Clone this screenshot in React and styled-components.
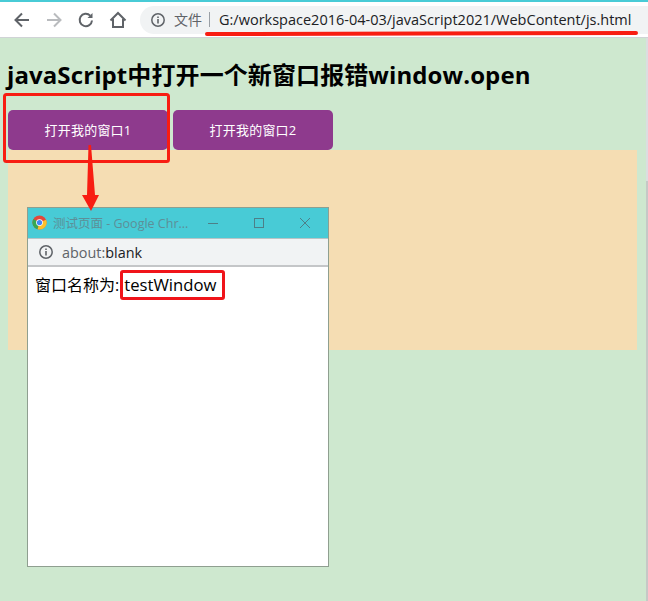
import React from "react";
import styled, { createGlobalStyle } from "styled-components";

const Global = createGlobalStyle`
  html, body { margin: 0; padding: 0; background: #cee8cf; }
  body { font-family: "Open Sans", "Noto Sans CJK SC", sans-serif; }
  #root { width: 648px; height: 601px; overflow: hidden; }
`;

const Screen = styled.div`
  position: relative;
  width: 648px;
  height: 601px;
  overflow: hidden;
  display: flex;
  flex-direction: column;
  background: #cee8cf;
`;

const TopStrip = styled.div`
  height: 2px;
  background: #48cbd6;
  flex: none;
`;

const Toolbar = styled.div`
  height: 36px;
  flex: none;
  background: #fff;
  display: flex;
  align-items: center;
  padding: 0 0 0 12px;
  box-sizing: border-box;
  border-bottom: 1px solid #d0d3d6;
`;

const NavIcon = styled.svg`
  width: 20px;
  height: 20px;
  margin-right: 12px;
  flex: none;
  fill: none;
  stroke: ${(p) => (p.$off ? "#b9bbbe" : "#5f6368")};
  stroke-width: 2;
`;

const UrlBar = styled.div`
  flex: 1;
  height: 28px;
  border-radius: 14px 0 0 14px;
  background: #f1f3f4;
  display: flex;
  align-items: center;
  padding-left: 10px;
`;

const FileLabel = styled.span`
  color: #5f6368;
  font-size: 14px;
  margin-left: 8px;
  padding-right: 7px;
  border-right: 1px solid #9aa0a6;
  line-height: 15px;
`;

const UrlText = styled.span`
  color: #202124;
  margin-left: 9px;
  font-size: 14.5px;
  white-space: nowrap;
`;

const Page = styled.main`
  flex: 1;
  padding: 0 10px 0 8px;
`;

const Heading = styled.h1`
  margin: 20px 0 18px -1px;
  font-size: 24px;
  letter-spacing: 0.1px;
  line-height: 34px;
  font-weight: 700;
  color: #000;
  white-space: nowrap;
`;

const ButtonRow = styled.div`
  display: flex;
  gap: 5px;
`;

const PurpleButton = styled.button`
  width: 160px;
  height: 40px;
  border: 0;
  padding: 0 0 2px;
  border-radius: 5px;
  background: #8e3a8d;
  color: #fff;
  font-family: inherit;
  font-size: 13px;
  letter-spacing: 0.2px;
`;

const Panel = styled.div`
  height: 200px;
  width: 629px;
  background: #f5ddb3;
`;

const PopupWindow = styled.div`
  position: absolute;
  left: 27px;
  top: 207px;
  width: 302px;
  height: 360px;
  box-sizing: border-box;
  border: 1px solid #8f9f90;
  background: #fff;
  display: flex;
  flex-direction: column;
`;

const TitleBar = styled.div`
  height: 30px;
  flex: none;
  background: #48cbd6;
  display: flex;
  align-items: center;
  padding-left: 4px;
  border-bottom: 1px solid #b8c4c6;
  font-size: 12.5px;
  color: #5d8f98;
`;

const TitleText = styled.span`
  margin-left: 6px;
  padding-bottom: 2px;
  width: 140px;
  white-space: nowrap;
`;

const WinControl = styled.svg`
  width: 12px;
  height: 12px;
  flex: none;
  margin-left: ${(p) => p.$gap}px;
  fill: none;
  stroke: #4d7f88;
  stroke-width: 1;
`;

const PopupAddress = styled.div`
  height: 26px;
  flex: none;
  background: #f1f3f4;
  border-bottom: 2px solid #c4c6c8;
  display: flex;
  align-items: center;
  padding-left: 10px;
  font-size: 14.4px;
  color: #202124;
`;

const AboutScheme = styled.span`
  color: #5f6368;
  margin-left: 8px;
`;

const PopupBody = styled.div`
  padding: 3px 0 0 7px;
  font-size: 16px;
  line-height: 30px;
  color: #000;
  display: flex;
  align-items: center;
  white-space: nowrap;
`;

const NameBox = styled.span`
  display: inline-block;
  border: 3px solid #f0141a;
  border-radius: 3px;
  margin-left: 1px;
  padding: 0 6px 0 1px;
  font-size: 16.7px;
  line-height: 24px;
`;

const ScrollEdge = styled.div`
  position: absolute;
  right: 0;
  top: 38px;
  width: 2px;
  height: 563px;
  background: linear-gradient(#dcdde0 0 143px, #c6c8c6 143px);
`;

const Annotation = styled.svg`
  position: absolute;
  left: 0;
  top: 0;
  width: 648px;
  height: 601px;
  pointer-events: none;
`;

const InfoIcon = styled.svg`
  width: 16px;
  height: 16px;
  flex: none;
`;

const Info = () => (
  <InfoIcon viewBox="0 0 16 16">
    <circle cx="8" cy="8" r="6.200" fill="none" stroke="#5f6368" strokeWidth="1.500" />
    <path d="M8 7v4.400M8 4.400v1.500" stroke="#5f6368" strokeWidth="1.600" fill="none" />
  </InfoIcon>
);

const ChromeLogo = styled.svg`
  width: 15px;
  height: 15px;
  flex: none;
  margin-bottom: 1px;
`;

export default function App() {
  return (
    <Screen>
      <Global />
      <TopStrip />
      <Toolbar>
        <NavIcon viewBox="0 0 20 20"><path d="M17 10H4M10 3.500 3.500 10l6.500 6.500" /></NavIcon>
        <NavIcon $off viewBox="0 0 20 20"><path d="M3 10h13M10 3.500l6.500 6.500L10 16.500" /></NavIcon>
        <NavIcon viewBox="0 0 20 20"><path d="M16 10.500A6.200 6.200 0 1 1 14.200 5.600" /><path d="M16.500 3v5h-5" fill="#5f6368" stroke="none" /></NavIcon>
        <NavIcon viewBox="0 0 20 20"><path d="M2.500 10.500 10 3l7.500 7.500M5 9v8h10V9" /></NavIcon>
        <UrlBar>
          <Info />
          <FileLabel>文件</FileLabel>
          <UrlText>G:/workspace2016-04-03/javaScript2021/WebContent/js.html</UrlText>
        </UrlBar>
      </Toolbar>
      <Page>
        <Heading>javaScript中打开一个新窗口报错window.open</Heading>
        <ButtonRow>
          <PurpleButton>打开我的窗口1</PurpleButton>
          <PurpleButton>打开我的窗口2</PurpleButton>
        </ButtonRow>
        <Panel />
      </Page>
      <PopupWindow>
        <TitleBar>
          <ChromeLogo viewBox="0 0 16 16">
            <circle cx="8" cy="8" r="7.500" fill="#e3463a" />
            <path d="M8 8 1.500 4.200A7.500 7.500 0 0 0 6 15.200Z" fill="#36a853" />
            <path d="M8 8 15 5a7.500 7.500 0 0 1-9 10.200Z" fill="#fbc02d" />
            <circle cx="8" cy="8" r="3.600" fill="#fff" />
            <circle cx="8" cy="8" r="2.800" fill="#4285f4" />
          </ChromeLogo>
          <TitleText>测试页面 - Google Chr...</TitleText>
          <WinControl $gap={14} viewBox="0 0 12 12"><path d="M1 6.500h10" /></WinControl>
          <WinControl $gap={34} viewBox="0 0 12 12"><rect x="1.500" y="1.500" width="9" height="9" /></WinControl>
          <WinControl $gap={34} viewBox="0 0 12 12"><path d="m1 1 10 10M11 1 1 11" /></WinControl>
        </TitleBar>
        <PopupAddress>
          <Info />
          <AboutScheme>about:</AboutScheme>blank
        </PopupAddress>
        <PopupBody>窗口名称为:<NameBox>testWindow</NameBox></PopupBody>
      </PopupWindow>
      <ScrollEdge />
      <Annotation viewBox="0 0 648 601">
        <path d="M207 34 636 33" stroke="#f81d12" strokeWidth="4" strokeLinecap="round" />
        <rect x="4.500" y="94.500" width="164" height="67" rx="2" fill="none" stroke="#f81d12" strokeWidth="3" />
        <path d="M88.500 145 91 145 95 195 99 195 91 211 82 195 87 195Z" fill="#f81d12" />
      </Annotation>
    </Screen>
  );
}
